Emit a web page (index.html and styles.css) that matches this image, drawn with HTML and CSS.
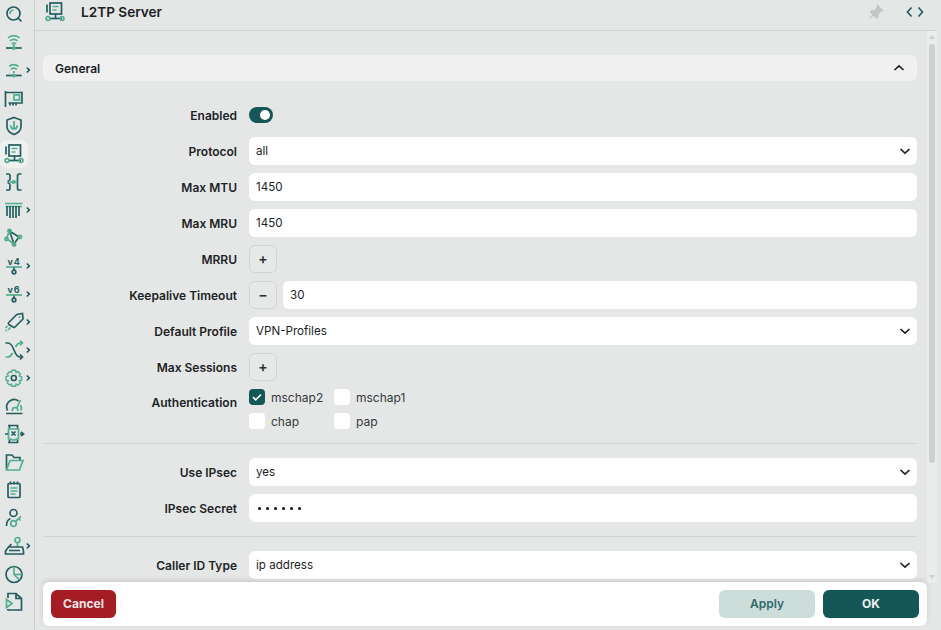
FILE: index.html
```html
<!DOCTYPE html>
<html lang="en">
<head>
<meta charset="utf-8">
<title>L2TP Server</title>
<link rel="stylesheet" href="styles.css">
</head>
<body>
<nav class="sidebar">
  <div class="nav-item"><svg viewBox="0 0 28 28"><circle class="d" cx="13.500" cy="13.500" r="6.500"/><path class="l" d="M10 14a3.600 3.600 0 0 1 3.500-4"/><path class="d" d="M18 18l3.500 3.500"/></svg></div>
  <div class="nav-item"><svg viewBox="0 0 28 28"><path class="l" d="M8 10a8 8 0 0 1 11.500 0M10 13a5 5 0 0 1 7.500 0M11.800 16a2.500 2.500 0 0 1 4 0"/><path class="d" d="M6 20h15.700"/><path class="l" d="M13.800 16v2"/><circle class="ldot" cx="13.800" cy="20" r="2"/></svg></div>
  <div class="nav-item"><svg viewBox="0 0 28 28"><path class="l" d="M9 10.500a7 7 0 0 1 9.500 0M10.800 13.500a4 4 0 0 1 6 0"/><path class="l" d="M13.800 15v2"/><path class="d" d="M6 19.500h15.700"/><circle class="ldot" cx="13.800" cy="19.500" r="2"/><path class="d" d="M26.800 11.500l2.500 2.500-2.500 2.500"/></svg></div>
  <div class="nav-item"><svg viewBox="0 0 28 28"><path class="d" d="M5.500 7v16M5.500 8.500H22v10.500H8.500M10 19v2.500M13 19v2.500M16 19v2.500"/><rect class="l" x="14" y="11" width="5.500" height="5"/></svg></div>
  <div class="nav-item"><svg viewBox="0 0 28 28"><path class="d" d="M14 5.500l7 2.500v6.500c0 4-3 6.500-7 8-4-1.500-7-4-7-8V8z"/><path class="l" d="M14 9v8M10.500 13.500c.5 2.500 2 3.500 3.500 3.500s3-1 3.500-3.500"/></svg></div>
  <div class="nav-item active"><svg viewBox="0 0 28 28"><use href="#server"/></svg></div>
  <div class="nav-item"><svg viewBox="0 0 28 28"><path class="d" d="M6 6h2.500c1.200 0 1.500.8 1.500 2v3c0 1.500-1 2-2.500 2.500M6 22h2.500c1.200 0 1.500-.8 1.500-2v-3c0-1.500-1-2-2.500-2.500M21.500 6H19c-1 0-1.500.8-1.500 2v12c0 1.200.5 2 1.500 2h2.500"/><path class="l" d="M10 14h7.500"/><circle class="ldot" cx="13.700" cy="14" r="2"/></svg></div>
  <div class="nav-item"><svg viewBox="0 0 28 28"><path class="l" d="M5 7.500h17.500M5.500 10.500h16.500"/><path class="d" d="M7 10v10M10 10v12M13 10v12M16 10v12M19 10v10"/><path class="d" d="M26.800 11.500l2.500 2.500-2.500 2.500"/></svg></div>
  <div class="nav-item"><svg viewBox="0 0 28 28"><path class="d" d="M9.500 7l9.500 6-5 7z"/><path class="l" d="M9.500 7l-3 7.500 7.500 5.500"/><circle class="lhollow" cx="9.500" cy="7" r="1.600"/><circle class="lhollow" cx="20" cy="13" r="1.600"/><circle class="lhollow" cx="6.500" cy="15" r="1.600"/><circle class="lhollow" cx="14" cy="20.500" r="1.600"/></svg></div>
  <div class="nav-item"><svg viewBox="0 0 28 28"><text class="ver" x="14" y="13">v4</text><path class="l" d="M6 15h16"/><circle class="d" cx="14" cy="20" r="1.800"/><path class="d" d="M14 15.500v2.500M26.800 11.500l2.500 2.500-2.500 2.500"/></svg></div>
  <div class="nav-item"><svg viewBox="0 0 28 28"><text class="ver" x="14" y="13">v6</text><path class="l" d="M6 15h16"/><circle class="d" cx="14" cy="20" r="1.800"/><path class="d" d="M14 15.500v2.500M26.800 11.500l2.500 2.500-2.500 2.500"/></svg></div>
  <div class="nav-item"><svg viewBox="0 0 28 28"><path class="d" d="M8.800 14.500l8-8 5.700-1 .5 5.500-8 8c-.6.6-1.400.6-2 0l-4.200-2.500c-.6-.6-.6-1.400 0-2z"/><circle class="ldot" cx="19.500" cy="9" r="1"/><path class="l" d="M5.500 20l2-2M8 22l2.500-2.500M5.500 23l1-1"/><path class="d" d="M26.800 11.500l2.500 2.500-2.500 2.500"/></svg></div>
  <div class="nav-item"><svg viewBox="0 0 28 28"><path class="d" d="M5.500 7h2.500c3 0 4.500 3 6 7s3 7 6 7h2"/><path class="l" d="M5.500 21h2.500c2.300 0 3.500-2 4.500-4M15.500 11c1-2 2.300-4 4.500-4h2"/><path class="l" d="M20 4.500l2.500 2.500-2.500 2.500"/><path class="d" d="M20 18.500l2.500 2.500-2.500 2.500M26.800 11.500l2.500 2.500-2.500 2.500"/></svg></div>
  <div class="nav-item"><svg viewBox="0 0 28 28"><path class="l gear" d="M12 5.500h4l.6 2.600 2.300-1 2.800 2.800-1.300 2.200 2.600.9v4l-2.600.6 1.300 2.400-2.800 2.800-2.300-1.300-.6 2.500h-4l-.6-2.500-2.300 1.300-2.800-2.800 1.300-2.400-2.600-.6v-4l2.600-.9-1.300-2.200 2.800-2.800 2.300 1z"/><circle class="d" cx="13.800" cy="14" r="2.500"/><path class="d" d="M26.800 11.500l2.500 2.500-2.500 2.500"/></svg></div>
  <div class="nav-item"><svg viewBox="0 0 28 28"><path class="d" d="M7.500 18.500a7.500 7.500 0 0 1 11-9.500M6 21.500h16.500"/><path class="l" d="M20.500 8l-3.500 7.500M12 19l1-3 4-.5 1 3.500M20.500 13a7 7 0 0 1 .5 5.500"/></svg></div>
  <div class="nav-item"><svg viewBox="0 0 28 28"><path class="d" d="M8 5.500h10.500M8 22.500h10.500M9.500 5.500v3M17.500 5.500v3M9.500 22.500v-3M17.500 22.500v-3"/><path class="l" d="M8.500 9h10v9.500l-5 1.500-5-1.500z"/><path class="d" d="M11.500 11.500l4 4M15.500 11.500l-4 4M5 14h3M20 14h3"/><path class="d" d="M21 12l2.500 2-2.500 2"/></svg></div>
  <div class="nav-item"><svg viewBox="0 0 28 28"><path class="d" d="M6.500 21V7h5.500l2 2.500h6v2.500"/><path class="l" d="M6.500 22h13l3.500-9.500H10z"/></svg></div>
  <div class="nav-item"><svg viewBox="0 0 28 28"><rect class="d" x="8" y="7.500" width="12" height="14" rx="1"/><path class="d" d="M10.500 5.500v3M14 5.500v3M17.500 5.500v3"/><path class="l" d="M10.500 12h7M10.500 15h7M10.500 18h5"/></svg></div>
  <div class="nav-item"><svg viewBox="0 0 28 28"><circle class="d" cx="13.500" cy="9" r="3.500"/><path class="d" d="M6.500 22c0-4 1.500-6.500 4-7.500"/><circle class="l" cx="13.500" cy="19.500" r="2.800"/><path class="l" d="M16 17l5-4.500M19 15l1.500 1.500"/></svg></div>
  <div class="nav-item"><svg viewBox="0 0 28 28"><circle class="l" cx="17.500" cy="8" r="2.500"/><path class="l" d="M17.500 10.500V15"/><path class="d" d="M5.500 22v-3l3-4h14l1 4v3zM9 18.500h11M8.500 15l3-3"/><path class="d" d="M26.800 11.500l2.500 2.500-2.500 2.500"/></svg></div>
  <div class="nav-item"><svg viewBox="0 0 28 28"><circle class="d" cx="14" cy="14.500" r="8"/><path class="l" d="M14 6.500v8l5.500 5.500"/><path class="l" d="M14 14.500h8"/></svg></div>
  <div class="nav-item"><svg viewBox="0 0 28 28"><path class="d" d="M8 10V5.500h8l5.500 5V22H8v-1M16 5.500v5h5.500"/><path class="l" d="M6.500 11.500l5.500 4-5.500 4z"/></svg></div>
</nav>

<main class="main">
  <header class="topbar">
    <svg class="title-icon" viewBox="0 0 28 28"><use href="#server"/></svg>
    <h1 class="title">L2TP Server</h1>
    <svg class="pin" viewBox="0 0 16 16"><path d="M9.500 1.500l5 5-1.800.6-2.700 2.700-.3 3-1.200.9-5.700-5.700.9-1.200 3-.3 2.700-2.700z"/><path d="M2 14l3.500-3.500"/></svg>
    <svg class="code" viewBox="0 0 18 12"><path d="M5.500 1.500L1.500 6l4 4.500M12.500 1.500l4 4.500-4 4.500"/></svg>
  </header>

  <div class="workspace">
    <div class="content">
      <section class="section-head">
        <span>General</span>
        <svg class="chev" viewBox="0 0 12 8"><path d="M1.500 6L6 1.800 10.500 6"/></svg>
      </section>

      <form class="form">
        <div class="row">
          <label class="lbl">Enabled</label>
          <span class="toggle"></span>
        </div>
        <div class="row">
          <label class="lbl">Protocol</label>
          <div class="field select">all<svg class="chev" viewBox="0 0 12 8"><path d="M1.500 2L6 6.200 10.500 2"/></svg></div>
        </div>
        <div class="row">
          <label class="lbl">Max MTU</label>
          <div class="field">1450</div>
        </div>
        <div class="row">
          <label class="lbl">Max MRU</label>
          <div class="field">1450</div>
        </div>
        <div class="row">
          <label class="lbl">MRRU</label>
          <button type="button" class="step">+</button>
        </div>
        <div class="row">
          <label class="lbl">Keepalive Timeout</label>
          <button type="button" class="step">−</button>
          <div class="field">30</div>
        </div>
        <div class="row">
          <label class="lbl">Default Profile</label>
          <div class="field select">VPN-Profiles<svg class="chev" viewBox="0 0 12 8"><path d="M1.500 2L6 6.200 10.500 2"/></svg></div>
        </div>
        <div class="row">
          <label class="lbl">Max Sessions</label>
          <button type="button" class="step">+</button>
        </div>
        <div class="row auth">
          <label class="lbl">Authentication</label>
          <div class="checks">
            <div class="check"><span class="box on"><svg viewBox="0 0 16 16"><path d="M4 8.200l2.800 2.600L12 5.500"/></svg></span>mschap2</div>
            <div class="check"><span class="box"></span>mschap1</div>
            <div class="check"><span class="box"></span>chap</div>
            <div class="check"><span class="box"></span>pap</div>
          </div>
        </div>

        <hr class="sep">

        <div class="row">
          <label class="lbl">Use IPsec</label>
          <div class="field select">yes<svg class="chev" viewBox="0 0 12 8"><path d="M1.500 2L6 6.200 10.500 2"/></svg></div>
        </div>
        <div class="row">
          <label class="lbl">IPsec Secret</label>
          <div class="field secret"><i></i><i></i><i></i><i></i><i></i><i></i></div>
        </div>

        <hr class="sep">

        <div class="row">
          <label class="lbl">Caller ID Type</label>
          <div class="field select">ip address<svg class="chev" viewBox="0 0 12 8"><path d="M1.500 2L6 6.200 10.500 2"/></svg></div>
        </div>
      </form>
    </div>

    <div class="scrollbar">
      <span class="arrow up"></span>
      <span class="thumb"></span>
      <span class="arrow down"></span>
    </div>

    <footer class="footer">
      <button type="button" class="btn cancel">Cancel</button>
      <div class="footer-right">
        <button type="button" class="btn apply">Apply</button>
        <button type="button" class="btn ok">OK</button>
      </div>
    </footer>
  </div>
</main>

<svg class="defs" aria-hidden="true">
  <symbol id="server" viewBox="0 0 28 28">
    <rect class="d" x="9" y="5" width="11.500" height="11"/>
    <path class="d" d="M6 6.500v8M14.500 16v4"/>
    <path class="l" d="M11.500 8.500h6M11.500 12h4"/>
    <path class="d" d="M8 20.500h13"/>
    <circle class="lhollow" cx="7" cy="20.500" r="1.900"/>
    <circle class="lhollow" cx="21" cy="20.500" r="1.900"/>
  </symbol>
</svg>
</body>
</html>
```

FILE: styles.css
```css
* { box-sizing: border-box; }

html, body {
  margin: 0;
  height: 100%;
}

body {
  display: flex;
  width: 941px;
  height: 630px;
  overflow: hidden;
  background: #e5e7e6;
  color: #1c2326;
  font-family: Inter, "Noto Sans", sans-serif;
  font-size: 12px;
}

.defs { width: 0; height: 0; position: absolute; }

/* Sidebar */
.sidebar {
  flex: 0 0 35px;
  border-right: 1px solid #cdd0cf;
  display: flex;
  flex-direction: column;
}

.nav-item {
  width: 28px;
  height: 28px;
  flex: none;
  border-radius: 7px;
}

.nav-item.active { background: #eff0f0; }

.nav-item svg {
  display: block;
  width: 28px;
  height: 28px;
  overflow: visible;
}

.d, .l, .lhollow {
  fill: none;
  stroke-width: 1.7;
}

.d { stroke: #245e60; }
.l { stroke: #52ae8e; }
.lhollow { stroke: #52ae8e; }
.ldot { fill: #52ae8e; }

.gear {
  transform: translate(13.8px, 14px) scale(.86) translate(-14px, -14.5px);
}

.ver {
  fill: #245e60;
  font-size: 9px;
  font-weight: 700;
  letter-spacing: .8px;
  text-anchor: middle;
}

/* Main */
.main {
  flex: 1;
  min-width: 0;
  display: flex;
  flex-direction: column;
}

.topbar {
  flex: 0 0 31px;
  min-height: 0;
  width: 900px;
  display: flex;
  align-items: center;
  border-bottom: 1px solid #cfd2d1;
  padding: 0 0 6px 7px;
}

.title-icon {
  flex: none;
  width: 28px;
  height: 28px;
  margin-left: -1px;
  overflow: visible;
}

.title {
  margin: 0 0 0 12px;
  flex: 1;
  font-size: 13.6px;
  font-weight: 600;
  line-height: 18px;
  color: #1c2326;
}

.pin {
  width: 16px;
  height: 16px;
  margin-right: 22px;
  fill: #c3c6c5;
  stroke: #c3c6c5;
  stroke-width: 1.5;
}

.code {
  width: 18px;
  height: 12px;
  margin-right: 11px;
  fill: none;
  stroke: #245e60;
  stroke-width: 1.7;
}

/* Workspace */
.workspace {
  position: relative;
  flex: 1;
  min-height: 0;
  display: flex;
  overflow: hidden;
}

.content {
  width: 890px;
  padding: 24px 8px 0 8px;
  flex: none;
}

.section-head {
  height: 26px;
  padding: 0 12px;
  display: flex;
  align-items: center;
  justify-content: space-between;
  background: #f0f0f0;
  border-radius: 6px;
  font-weight: 600;
}

.chev {
  width: 12px;
  height: 8px;
  fill: none;
  stroke: #1c2326;
  stroke-width: 1.7;
}

.form {
  display: flex;
  flex-direction: column;
  gap: 8px;
  padding-top: 20px;
}

.row {
  display: flex;
  align-items: center;
  gap: 6px;
  height: 28px;
}

.lbl {
  flex: 0 0 194px;
  margin-right: 6px;
  text-align: right;
  font-weight: 600;
  white-space: nowrap;
}

.field {
  flex: 1;
  height: 28px;
  padding: 0 7px;
  display: flex;
  align-items: center;
  justify-content: space-between;
  background: #fff;
  border-radius: 6px;
  color: #1c2326;
  font-size: 11.6px;
  font-weight: 400;
}

.select .chev { margin-right: -1px; }

.secret {
  justify-content: flex-start;
  gap: 5px;
  padding-left: 9px;
}

.secret i {
  width: 3px;
  height: 3px;
  border-radius: 50%;
  background: #111;
}

.toggle {
  position: relative;
  width: 24px;
  height: 16px;
  border-radius: 8px;
  background: #155757;
}

.toggle::after {
  content: "";
  position: absolute;
  right: 3px;
  top: 3px;
  width: 10px;
  height: 10px;
  border-radius: 50%;
  background: #fff;
}

.step {
  width: 28px;
  height: 28px;
  padding: 0;
  flex: none;
  font: 600 14px/1 Inter, sans-serif;
  color: #2b3236;
  background: #e7e8e8;
  border: 1px solid #d2d4d3;
  border-radius: 6px;
}

.row.auth {
  height: 40px;
}

.row.auth .lbl {
  align-self: flex-start;
  margin-top: 7px;
  line-height: 14px;
}

.checks {
  display: grid;
  grid-template-columns: 85px 85px;
  row-gap: 8px;
}

.check {
  display: flex;
  align-items: center;
  gap: 6px;
  height: 16px;
  color: #33393c;
  white-space: nowrap;
}

.box {
  width: 16px;
  height: 16px;
  flex: none;
  border-radius: 4px;
  background: #fff;
}

.box.on { background: #155757; }

.box svg {
  display: block;
  width: 16px;
  height: 16px;
  fill: none;
  stroke: #fff;
  stroke-width: 1.6;
}

.sep {
  width: 100%;
  height: 1px;
  border: 0;
  background: #d3d5d4;
  margin: 6px 0;
}

/* Scrollbar */
.scrollbar {
  width: 10px;
  margin-left: 2px;
  flex: none;
  background: #ebecec;
  height: 552px;
  display: flex;
  flex-direction: column;
  align-items: center;
}

.thumb {
  width: 6px;
  height: 419px;
  margin-top: 5px;
  border-radius: 3px;
  background: #cdd0cf;
}

.arrow {
  width: 0;
  height: 0;
  border-left: 3.5px solid transparent;
  border-right: 3.5px solid transparent;
}

.arrow.up {
  margin-top: 4px;
  border-bottom: 4px solid #cdd0cf;
}

.arrow.down {
  margin-top: auto;
  margin-bottom: 4px;
  border-top: 4px solid #cdd0cf;
}

/* Footer */
.footer {
  position: absolute;
  left: 8px;
  top: 551px;
  width: 884px;
  height: 44px;
  padding: 8px;
  display: flex;
  justify-content: space-between;
  background: #fff;
  border-radius: 6px;
  box-shadow: 0 -2px 5px rgba(0, 0, 0, .12);
}

.footer-right {
  display: flex;
  gap: 8px;
}

.btn {
  height: 28px;
  border: 0;
  border-radius: 6px;
  font: 700 12px/1 Inter, sans-serif;
}

.cancel {
  width: 65px;
  background: #a51c24;
  color: #f6e9ea;
}

.apply {
  width: 96px;
  background: #cdddda;
  color: #2d6a6a;
  font-weight: 600;
}

.ok {
  width: 96px;
  background: #155757;
  color: #eef4f4;
}
```
